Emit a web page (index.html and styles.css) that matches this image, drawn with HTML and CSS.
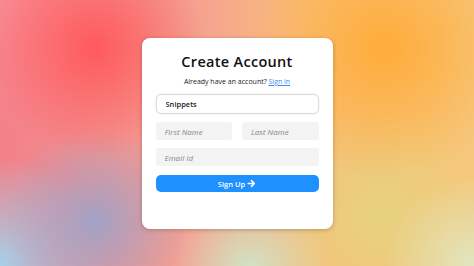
FILE: index.html
```html
<!DOCTYPE html>
<html lang="en">

<head>
    <meta charset="UTF-8">
    <meta name="viewport" content="width=device-width, initial-scale=1.0">
    <title>Create Account</title>
    <link rel="stylesheet" href="styles.css">
</head>

<body>
    <div class="card">
        <h1>Create Account</h1>
        <p class="subtitle">Already have an account? <a href="#" class="signin-link">Sign in</a></p>

        <form class="signup-form">
            <input type="text" class="field field-active" value="Snippets">
            <div class="row">
                <input type="text" class="field" placeholder="First Name">
                <input type="text" class="field" placeholder="Last Name">
            </div>
            <input type="email" class="field" placeholder="Email Id">
            <button type="button" class="btn">
                Sign Up
                <svg class="arrow" viewBox="0 0 12 12" width="9" height="9">
                    <path d="M1.5 6h8M6 2.2L9.8 6 6 9.8" fill="none" stroke="#fff" stroke-width="2" stroke-linecap="round" stroke-linejoin="round" />
                </svg>
            </button>
        </form>
    </div>
</body>

</html>
```

FILE: styles.css
```css
html,
body {
    height: 100%;
}

body {
    margin: 0;
    font-family: 'Open Sans', 'Noto Sans', sans-serif;
    display: flex;
    align-items: flex-start;
    justify-content: center;
    background-color: #f3c98f;
    background-image:
        radial-gradient(circle at 95px 48px, #ff5a5c 0, rgba(255, 90, 92, 0) 110px),
        radial-gradient(circle at 385px 48px, #ffac38 0, rgba(255, 172, 56, 0) 130px),
        radial-gradient(circle at 95px 222px, #a2a2c6 0, rgba(162, 162, 198, 0) 95px),
        radial-gradient(circle at 0 266px, #a5d0ea 0, rgba(165, 208, 234, 0) 110px),
        radial-gradient(circle at 250px 270px, #cfe4c6 0, rgba(207, 228, 198, 0) 80px),
        radial-gradient(circle at 474px 266px, #e0e6c0 0, rgba(224, 230, 192, 0) 90px),
        radial-gradient(circle at 380px 215px, #e6d27f 0, rgba(230, 210, 127, 0) 110px),
        radial-gradient(circle at 0 0, #f98c95 0, rgba(249, 140, 149, 0) 140px),
        linear-gradient(90deg, #f28089 0%, #f5a092 40%, #f8be7a 65%, #f6c77c 100%);
}

.card {
    margin-top: 38px;
    width: 191px;
    height: 191px;
    box-sizing: border-box;
    padding: 14px 14px 0;
    background-color: #fff;
    border-radius: 8px;
    box-shadow: 0 1px 4px rgba(80, 60, 40, 0.35);
    text-align: center;
}

h1 {
    margin: 0;
    font-size: 14.5px;
    font-weight: 600;
    letter-spacing: 0.3px;
    color: #111;
    line-height: 20px;
}

.subtitle {
    margin: 5px 0 0;
    font-size: 7px;
    line-height: 10px;
    color: #222;
}

.signin-link {
    color: #3b8ef0;
    text-decoration: underline;
}

.signup-form {
    margin-top: 7px;
    display: flex;
    flex-direction: column;
    gap: 8px;
}

.row {
    display: flex;
    gap: 10px;
}

.row .field {
    flex: 1;
    min-width: 0;
}

.field {
    box-sizing: border-box;
    width: 100%;
    height: 18px;
    margin: 0;
    padding: 0 9px;
    border: none;
    border-radius: 3px;
    background-color: #f3f3f3;
    font-family: inherit;
    font-size: 8px;
    color: #222;
    outline: none;
}

.field::placeholder {
    color: #888;
    font-style: italic;
}

.field-active {
    height: 20px;
    background-color: #fff;
    border: 1px solid #d9d9d9;
    border-radius: 5px;
    box-shadow: 0 0 2px rgba(0, 0, 0, 0.1);
    font-size: 7.5px;
    font-weight: 600;
}

.btn {
    height: 17px;
    margin-top: 1px;
    border: none;
    border-radius: 5px;
    background-color: #1e90ff;
    color: #fff;
    font-family: inherit;
    font-size: 7.5px;
    font-weight: 600;
    display: flex;
    align-items: center;
    justify-content: center;
    gap: 2px;
    padding: 0;
}

.arrow {
    display: block;
}
```
